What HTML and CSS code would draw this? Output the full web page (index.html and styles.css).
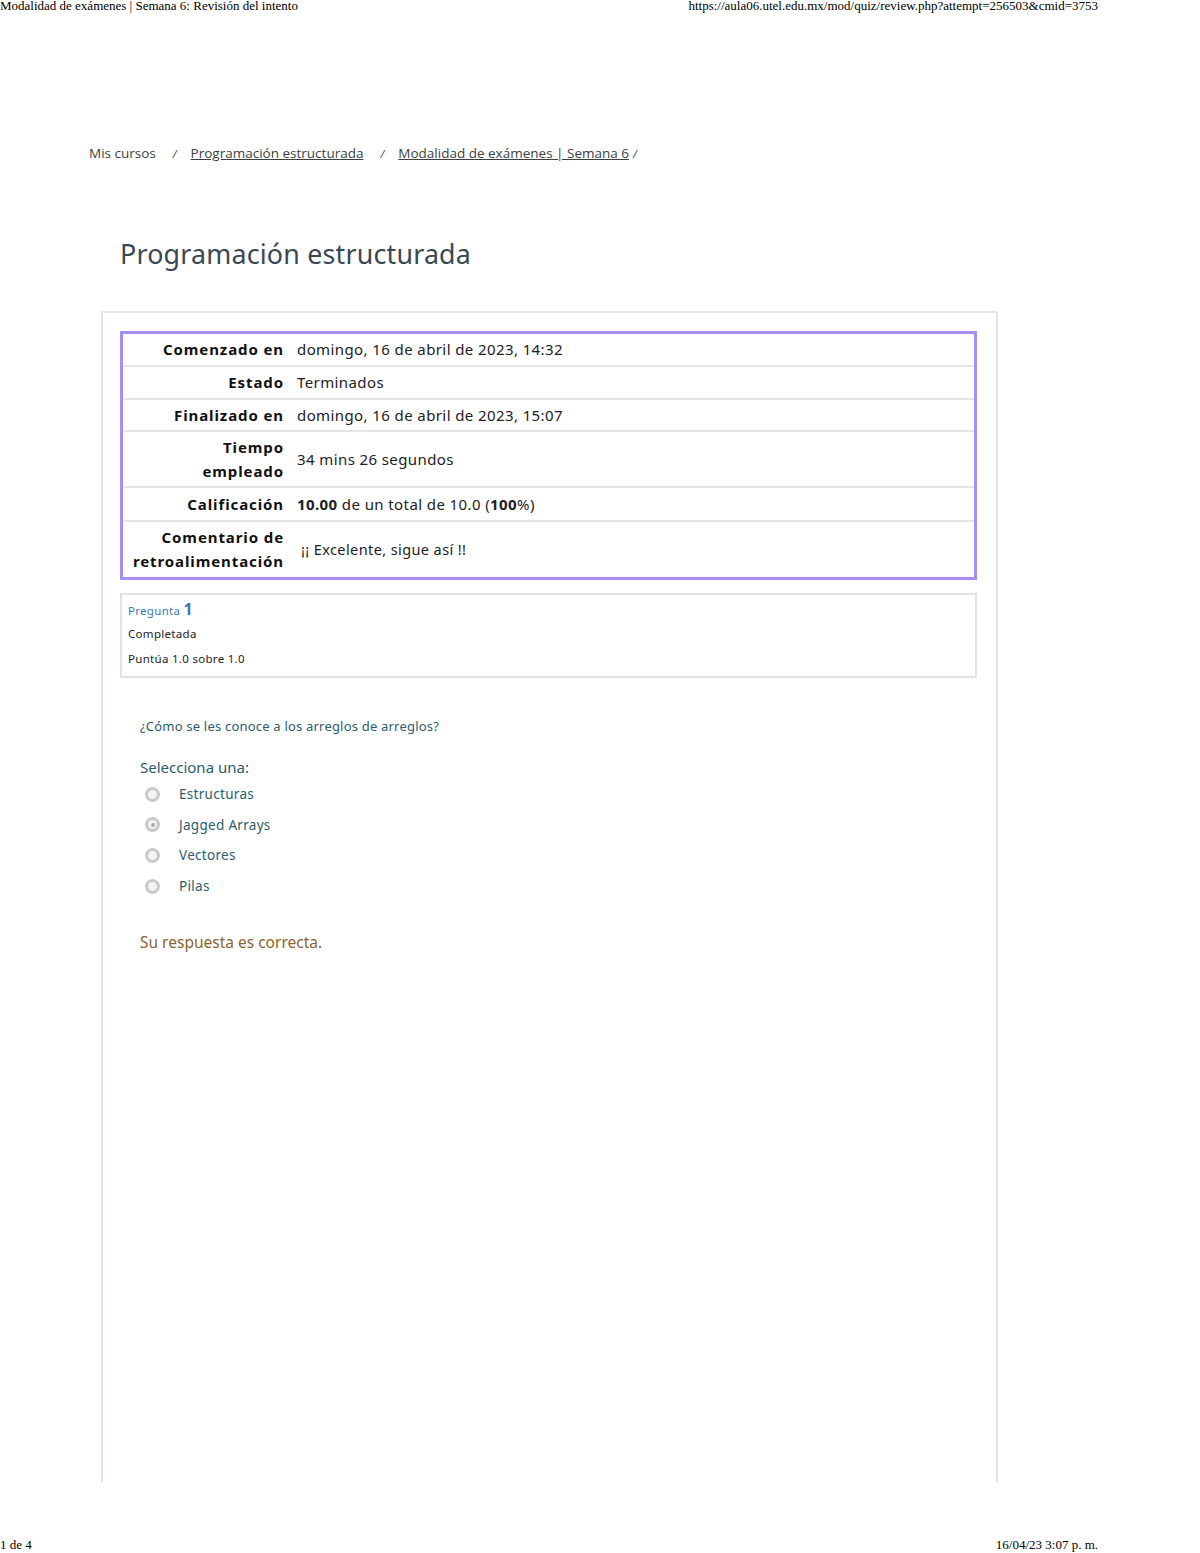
FILE: index.html
```html
<!DOCTYPE html>
<html lang="es">
<head>
<meta charset="utf-8">
<title>Modalidad de exámenes | Semana 6: Revisión del intento</title>
<link rel="stylesheet" href="styles.css">
</head>
<body>
<div class="page">
  <div class="printhead">
    <span>Modalidad de exámenes | Semana 6: Revisión del intento</span>
    <span>https://aula06.utel.edu.mx/mod/quiz/review.php?attempt=256503&amp;cmid=3753</span>
  </div>

  <nav class="crumbs">
    <span class="crumb">Mis cursos</span>
    <span class="sep">/</span>
    <a class="crumb link">Programación estructurada</a>
    <span class="sep">/</span>
    <a class="crumb link wide">Modalidad de exámenes | Semana 6</a>
    <span class="sep tight">/</span>
  </nav>

  <h1 class="title">Programación estructurada</h1>

  <div class="panel">
    <table class="summary">
      <tr class="r1"><th>Comenzado en</th><td>domingo, 16 de abril de 2023, 14:32</td></tr>
      <tr class="r2"><th>Estado</th><td>Terminados</td></tr>
      <tr class="r3"><th>Finalizado en</th><td>domingo, 16 de abril de 2023, 15:07</td></tr>
      <tr class="r4"><th>Tiempo<br>empleado</th><td>34 mins 26 segundos</td></tr>
      <tr class="r5"><th>Calificación</th><td><b>10.00</b> de un total de 10.0 (<b>100</b>%)</td></tr>
      <tr class="r6"><th>Comentario de<br>retroalimentación</th><td class="fb">¡¡ Excelente, sigue así !!</td></tr>
    </table>

    <div class="qinfo">
      <div class="qno">Pregunta <span class="num">1</span></div>
      <div class="qstate">Completada</div>
      <div class="qgrade">Puntúa 1.0 sobre 1.0</div>
    </div>

    <div class="qtext">¿Cómo se les conoce a los arreglos de arreglos?</div>
    <div class="prompt">Selecciona una:</div>
    <ul class="answers">
      <li><span class="radio"></span><span>Estructuras</span></li>
      <li><span class="radio on"></span><span>Jagged Arrays</span></li>
      <li><span class="radio"></span><span>Vectores</span></li>
      <li><span class="radio"></span><span>Pilas</span></li>
    </ul>
    <div class="feedback">Su respuesta es correcta.</div>
  </div>

  <div class="printfoot">
    <span>1 de 4</span>
    <span>16/04/23 3:07 p. m.</span>
  </div>
</div>
</body>
</html>
```

FILE: styles.css
```css
html, body {
  margin: 0;
  padding: 0;
  background: #ffffff;
}
.page {
  width: 1200px;
  height: 1553px;
  display: flex;
  flex-direction: column;
  font-family: "Noto Sans", "Open Sans", sans-serif;
  color: #1d2125;
}
.printhead, .printfoot {
  display: flex;
  justify-content: space-between;
  padding-right: 102px;
  font-family: "Liberation Serif", serif;
  font-size: 13px;
  line-height: 12px;
  color: #000;
}
.printfoot {
  margin-top: auto;
  padding-bottom: 2px;
}
.crumbs {
  display: flex;
  align-items: center;
  margin-top: 132px;
  padding-left: 89px;
  font-family: "Open Sans", sans-serif;
  font-size: 13.5px;
  height: 18px;
  color: #3a3f44;
}
.crumb.link {
  text-decoration: underline;
  color: #3a3f44;
}
.sep {
  margin: 0 14px 0 17px;
  font-size: 11px;
  font-style: italic;
}
.sep.tight { margin-left: 4px; }
.title {
  margin: 76px 0 0 120px;
  font-family: "Noto Sans", sans-serif;
  font-weight: 400;
  font-size: 26.8px;
  line-height: 32px;
  color: #3a4852;
  letter-spacing: 0.2px;
}
.panel {
  margin: 41px 0 0 101px;
  width: 858px;
  height: 1151px;
  border: 2px solid #e1e5e9;
  border-bottom: none;
  padding: 18px 18px 0 17px;
}
.summary {
  width: 857px;
  border-collapse: collapse;
  border: 3px solid #a78ef6;
  font-size: 15px;
  line-height: 24px;
  letter-spacing: 0.4px;
}
.summary th {
  width: 155px;
  text-align: right;
  font-weight: 700;
  padding: 0 6px 0 6px;
  color: #111;
  letter-spacing: 0.9px;
}
.summary td {
  padding: 0 7px;
  color: #1d2125;
}
.summary tr + tr th, .summary tr + tr td {
  border-top: 2px solid #e3e6e9;
}
.summary .r1 { height: 33px; }
.summary .r2 { height: 33px; }
.summary .r3 { height: 32px; }
.summary .r4 { height: 56px; }
.summary .r5 { height: 34px; }
.summary .r6 { height: 58px; }
.summary td.fb { padding-left: 11px; font-size: 14.5px; }
.qinfo {
  margin-top: 13px;
  width: 847px;
  border: 2px solid #dfe3e7;
  padding: 2px 0 5px 6px;
  font-size: 11.5px;
  line-height: 25px;
  letter-spacing: 0.3px;
  color: #1d2125;
}
.qno { color: #3c76b3; height: 24px; }
.qno .num { font-size: 16px; font-weight: 700; }
.qtext {
  margin: 39px 0 0 20px;
  font-size: 13px;
  color: #2b5d6c;
  letter-spacing: 0.2px;
}
.prompt {
  margin: 22px 0 0 20px;
  font-size: 15px;
  color: #2b5d6c;
}
.answers {
  list-style: none;
  margin: 2px 0 0 25px;
  padding: 0;
  font-size: 13.5px;
  letter-spacing: 0.3px;
  color: #2b5d6c;
}
.answers li {
  display: flex;
  align-items: center;
  height: 30.6px;
}
.radio {
  width: 9px;
  height: 9px;
  border: 3px solid #c9c9c9;
  border-radius: 50%;
  margin-right: 19px;
  background: #f4f4f4;
  display: flex;
  align-items: center;
  justify-content: center;
}
.radio.on::after {
  content: "";
  width: 4px;
  height: 4px;
  border-radius: 50%;
  background: #aaaaaa;
}
.feedback {
  margin: 30px 0 0 20px;
  font-size: 15.5px;
  color: #8a6430;
}
```
